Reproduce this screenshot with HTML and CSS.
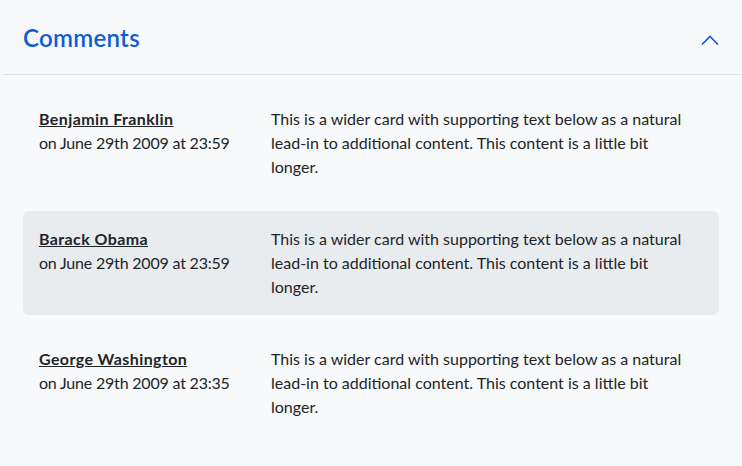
FILE: index.html
```html
<!DOCTYPE html>
<html lang="en">
<head>
    <meta charset="UTF-8">
    <meta name="viewport" content="width=device-width, initial-scale=1.0">
    <title>Comments</title>
    <link rel="stylesheet" href="styles.css">
</head>
<body>
    <section class="panel">
        <div class="panel-header">
            <h2 class="panel-title">Comments</h2>
            <button class="toggle" type="button" aria-label="Collapse">
                <svg width="18" height="10" viewBox="0 0 18 10" fill="none">
                    <path d="M1 9.5L9 1.5L17 9.5" stroke="#0b5ed7" stroke-width="1.6"/>
                </svg>
            </button>
        </div>

        <div class="comments">
            <div class="comment">
                <div class="author">
                    <a href="#" class="author-name">Benjamin Franklin</a>
                    <div class="date">on June 29th 2009 at 23:59</div>
                </div>
                <p class="body">This is a wider card with supporting text below as a natural lead-in to additional content. This content is a little bit longer.</p>
            </div>
            <div class="comment active">
                <div class="author">
                    <a href="#" class="author-name">Barack Obama</a>
                    <div class="date">on June 29th 2009 at 23:59</div>
                </div>
                <p class="body">This is a wider card with supporting text below as a natural lead-in to additional content. This content is a little bit longer.</p>
            </div>
            <div class="comment">
                <div class="author">
                    <a href="#" class="author-name">George Washington</a>
                    <div class="date">on June 29th 2009 at 23:35</div>
                </div>
                <p class="body">This is a wider card with supporting text below as a natural lead-in to additional content. This content is a little bit longer.</p>
            </div>
        </div>
    </section>
</body>
</html>
```

FILE: styles.css
```css
body {
    margin: 0;
    font-family: Lato, "Noto Sans", sans-serif;
    font-size: 16px;
    line-height: 24px;
    color: #212529;
    background-color: #f8f9fa;
}
.panel {
    padding-left: 3px;
}
.panel-header {
    display: flex;
    align-items: center;
    justify-content: space-between;
    height: 74px;
    padding: 0 23px 0 20px;
    border-bottom: 1px solid #dee2e6;
}
.panel-title {
    margin: 0;
    font-size: 24px;
    font-weight: 600;
    letter-spacing: 0.3px;
    color: #0b5ed7;
    padding-top: 2px;
}
.toggle {
    background: none;
    border: none;
    padding: 0;
    margin-top: 6px;
    display: flex;
    cursor: pointer;
}
.comments {
    display: flex;
    flex-direction: column;
    gap: 16px;
    padding: 16px 20px 16px 20px;
    margin-right: 3px;
}
.comment {
    display: flex;
    padding: 16px;
    border-radius: 6px;
}
.comment.active {
    background-color: #e9ecef;
}
.author {
    width: 232px;
    flex-shrink: 0;
}
.author-name {
    color: #212529;
    font-weight: 700;
    letter-spacing: 0.4px;
    text-decoration: underline;
}
.date {
    letter-spacing: -0.2px;
}
.body {
    margin: 0;
    flex: 1;
    padding-right: 16px;
}
```
